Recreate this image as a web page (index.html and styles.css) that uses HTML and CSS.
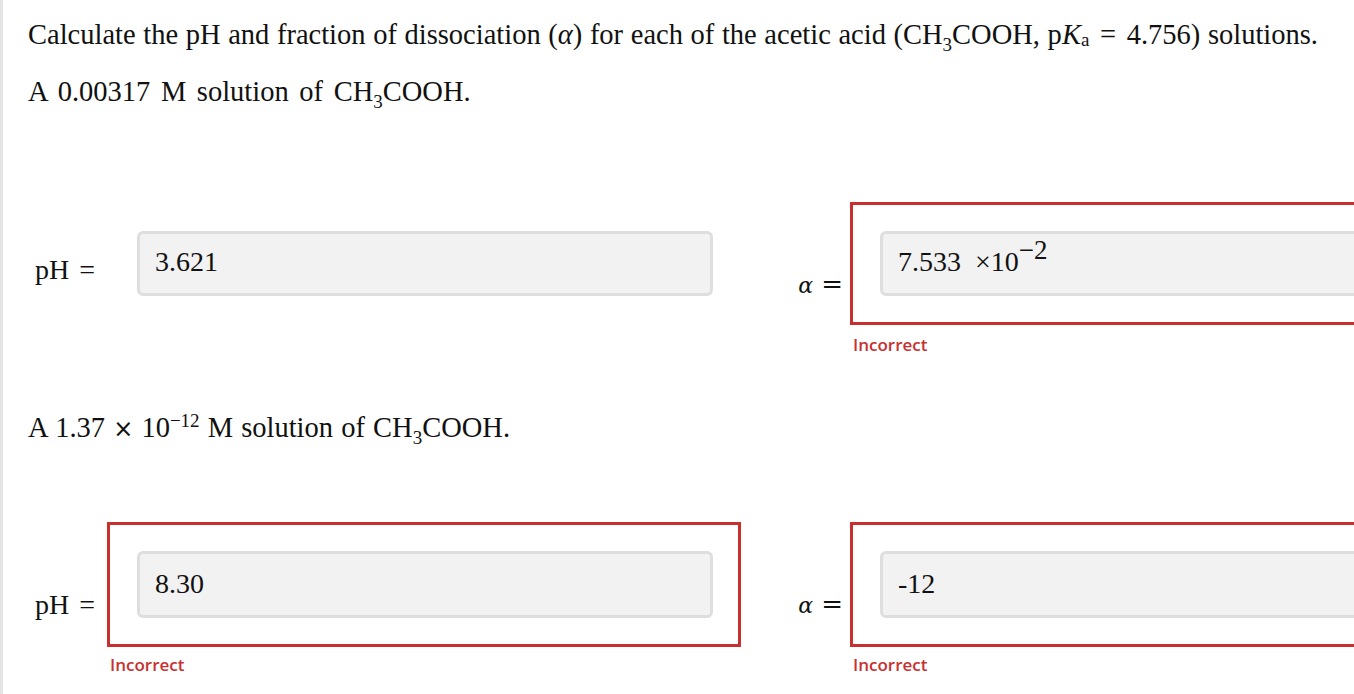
FILE: index.html
```html
<!DOCTYPE html>
<html lang="en">
<head>
<meta charset="utf-8">
<title>Acetic acid dissociation</title>
<link rel="stylesheet" href="styles.css">
</head>
<body>
<div class="page">
  <p class="title">Calculate the pH and fraction of dissociation (<i class="alpha-i">α</i>) for each of the acetic acid (CH<sub class="sub">3</sub>COOH, p<i>K</i><span class="ka">a</span> <span class="eq">=</span> 4.756) solutions.</p>
  <p class="line line2">A 0.00317 M solution of CH<sub class="sub">3</sub>COOH.</p>

  <div class="row row1">
    <div class="field ph-field">
      <div class="label label-ph label-plain">pH =</div>
      <div class="answer-col">
        <div class="answer">
          <div class="input">3.621</div>
        </div>
      </div>
    </div>
    <div class="field alpha-field">
      <div class="label label-alpha"><i class="alpha">α</i><span class="meq">=</span></div>
      <div class="answer-col">
        <div class="answer wrong">
          <div class="input">7.533<span class="times">×10<sup class="exp">−2</sup></span></div>
        </div>
        <div class="feedback">Incorrect</div>
      </div>
    </div>
  </div>

  <p class="line line3">A 1.37 <span class="mul">×</span> 10<sup class="sup">−12</sup> M solution of CH<sub class="sub">3</sub>COOH.</p>

  <div class="row row2">
    <div class="field ph-field">
      <div class="label label-ph">pH =</div>
      <div class="answer-col">
        <div class="answer wrong">
          <div class="input">8.30</div>
        </div>
        <div class="feedback">Incorrect</div>
      </div>
    </div>
    <div class="field alpha-field">
      <div class="label label-alpha"><i class="alpha">α</i><span class="meq">=</span></div>
      <div class="answer-col">
        <div class="answer wrong">
          <div class="input">-12</div>
        </div>
        <div class="feedback">Incorrect</div>
      </div>
    </div>
  </div>
</div>
</body>
</html>
```

FILE: styles.css
```css
html, body {
  margin: 0;
  padding: 0;
  background: #ffffff;
  overflow: hidden;
}

body {
  font-family: "Liberation Serif", "Times New Roman", serif;
  font-size: 28px;
  color: #111111;
  width: 1354px;
  height: 694px;
}

.page {
  border-left: 3px solid #e4e4e4;
  padding: 20px 0 0 25px;
  height: 694px;
  box-sizing: border-box;
  width: 1600px;
}

.title, .line {
  margin: 0;
  font-size: 28.5px;
  word-spacing: 0.5px;
  line-height: 30px;
  white-space: nowrap;
}

.line2 {
  margin-top: 27px;
  word-spacing: 3.5px;
}

.sub {
  font-size: 19px;
  vertical-align: -7px;
  line-height: 0;
}

.sup {
  font-size: 19px;
  vertical-align: 10px;
  line-height: 0;
}

.ka {
  font-size: 19px;
  vertical-align: -2px;
  line-height: 0;
}

.eq {
  padding: 0 3px;
}

.mul {
  font-family: "DejaVu Sans", sans-serif;
  font-size: 24px;
}

.row {
  display: flex;
  align-items: flex-start;
}

.row1 {
  margin-top: 95px;
}

.line3 {
  margin-top: 58px;
  word-spacing: 1px;
}

.row2 {
  margin-top: 78px;
}

.field {
  display: flex;
  align-items: flex-start;
}

.label {
  line-height: 30px;
  white-space: nowrap;
}

.label-ph {
  width: 72px;
  padding-left: 7px;
  margin-top: 68px;
  word-spacing: 3px;
}

.label-plain {
  margin-top: 53px;
}

.alpha-field {
  margin-left: 27px;
}

.label-alpha {
  width: 75px;
  padding-right: 7px;
  margin-top: 67px;
  display: flex;
  justify-content: flex-end;
  align-items: baseline;
}

.alpha {
  font-family: "DejaVu Serif", serif;
  font-size: 22px;
  font-style: italic;
}

.meq {
  font-family: "DejaVu Serif", serif;
  font-size: 26px;
  margin-left: 8px;
}

.answer-col {
  display: flex;
  flex-direction: column;
}

.answer {
  width: 634px;
  box-sizing: border-box;
  border: 3px solid transparent;
  padding: 26px 25px 26px 27px;
}

.answer.wrong {
  border-color: #c8302f;
}

.input {
  height: 65px;
  box-sizing: border-box;
  border: 3px solid #dedede;
  border-radius: 6px;
  background: #f2f2f2;
  padding: 13px 15px 0;
  line-height: 30px;
  white-space: nowrap;
}

.row2 .input {
  height: 67px;
  padding-top: 15px;
}

.times {
  margin-left: 14px;
}

.exp {
  font-size: 27px;
  vertical-align: 12px;
  line-height: 0;
}

.feedback {
  font-family: "Open Sans", "Noto Sans", sans-serif;
  font-weight: 600;
  font-size: 17px;
  line-height: 20px;
  color: #c8302f;
  margin-top: 10px;
  padding-left: 3px;
}

.row2 .feedback {
  margin-top: 8px;
}
```
